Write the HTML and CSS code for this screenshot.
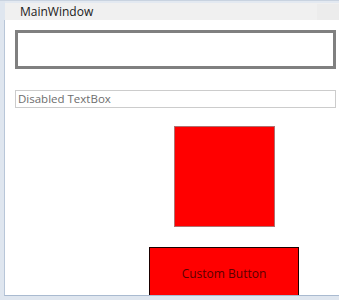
FILE: index.html
```html
<!DOCTYPE html>
<html>
<head>
<meta charset="utf-8">
<link rel="stylesheet" href="styles.css">
</head>
<body>
<div class="window">
  <div class="titlebar"><span class="title">MainWindow</span><span class="ctrl"></span></div>
  <div class="client">
    <div class="textbox"></div>
    <div class="textbox-disabled">Disabled TextBox</div>
    <div class="stack">
      <div class="square"></div>
      <div class="custom-button">Custom Button</div>
    </div>
  </div>
</div>
</body>
</html>
```
FILE: styles.css
```css
html, body {
  margin: 0;
  padding: 0;
}
body {
  width: 339px;
  height: 300px;
  overflow: hidden;
  background: #dfe6ef;
  font-family: "Segoe UI", "Open Sans", "Noto Sans", sans-serif;
}
.window {
  display: flex;
  flex-direction: column;
  width: 339px;
  height: 300px;
  border-top: 1px solid #c9d3e0;
  box-sizing: border-box;
}
.titlebar {
  height: 19px;
  margin-left: 5px;
  background: #f0f0f0;
  display: flex;
  align-items: center;
  justify-content: space-between;
  border-top: 2px solid #e3e9f1;
  box-sizing: border-box;
}
.title {
  font-size: 12px;
  color: #1a1a1a;
  padding-left: 15px;
  line-height: 16px;
}
.ctrl {
  width: 22px;
  height: 16px;
  background: #ececec;
}
.client {
  margin-left: 4px;
  height: 276px;
  background: #ffffff;
  border-left: 1px solid #b8c6d8;
  border-bottom: 1px solid #a9bad0;
  padding-left: 10px;
  padding-top: 10px;
  box-sizing: border-box;
  overflow: hidden;
}
.textbox {
  width: 321px;
  height: 39px;
  border: 3px solid #808080;
  box-sizing: border-box;
}
.textbox-disabled {
  margin-top: 21px;
  width: 321px;
  height: 18px;
  border: 1px solid #cccccc;
  box-sizing: border-box;
  font-size: 11.5px;
  line-height: 15px;
  color: #6d6d6d;
  padding-left: 2px;
}
.stack {
  display: flex;
  flex-direction: column;
  align-items: center;
  width: 150px;
  margin-left: 134px;
}
.square {
  margin-top: 18px;
  width: 101px;
  height: 101px;
  background: #ff0000;
  border: 1px solid #b07070;
  box-sizing: border-box;
}
.custom-button {
  margin-top: 20px;
  width: 150px;
  height: 52px;
  background: #ff0000;
  border: 1px solid #1a0000;
  box-sizing: border-box;
  display: flex;
  align-items: center;
  justify-content: center;
  font-size: 12px;
  color: #5a0000;
}
```
